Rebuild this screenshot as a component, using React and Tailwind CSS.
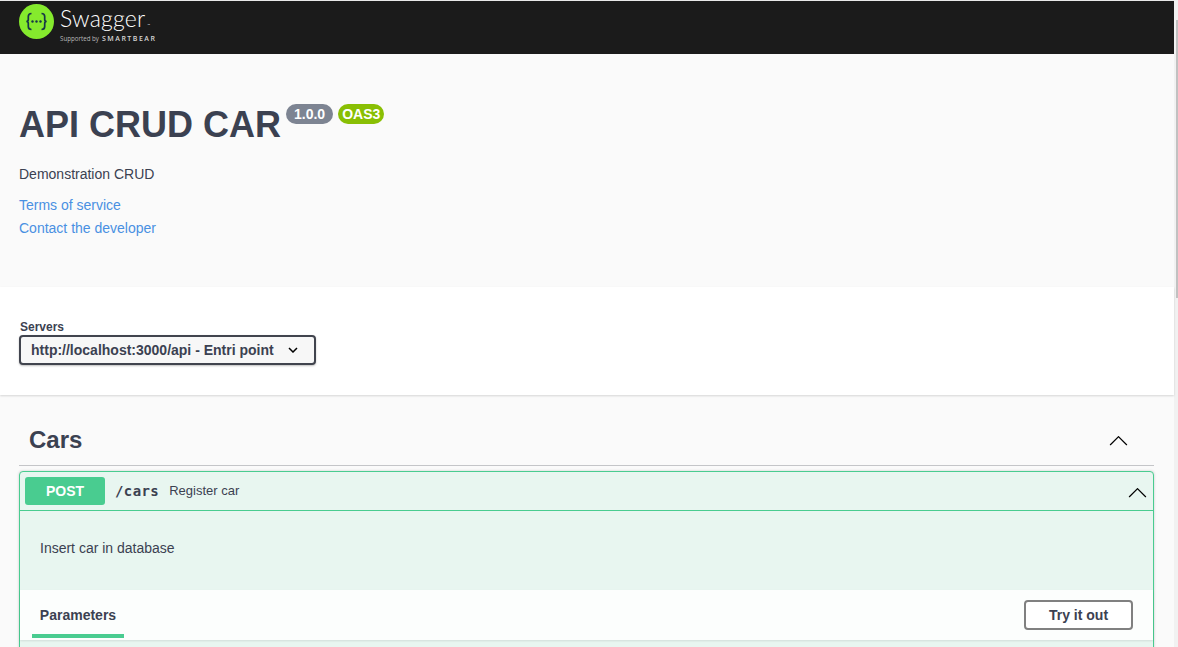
import React from "react";

const sans = "font-['Liberation_Sans',Arial,sans-serif]";

function Logo() {
  return (
    <div className="flex items-start">
      <svg width="35" height="35" viewBox="0 0 35 35" className="shrink-0">
        <circle cx="17.5" cy="17.5" r="17.5" fill="#85ea2d" />
        <path d="M12.5 9.5c-2.600 0-3.200 1-3.200 3v3c0 1.300-.8 2-2 2 1.200 0 2 .7 2 2v3c0 2 .6 3 3.200 3M22.500 9.500c2.600 0 3.200 1 3.200 3v3c0 1.300.8 2 2 2-1.200 0-2 .7-2 2v3c0 2-.6 3-3.200 3" fill="none" stroke="#173647" strokeWidth="1.700" />
        <circle cx="13.500" cy="17.500" r="1.200" fill="#173647" />
        <circle cx="17.500" cy="17.500" r="1.200" fill="#173647" />
        <circle cx="21.500" cy="17.500" r="1.200" fill="#173647" />
      </svg>
      <div className="ml-[6px] flex flex-col">
        <div className="flex items-end h-[29px]">
          <span className="font-['Lato',sans-serif] font-light text-[23px] leading-[29px] tracking-[0.2px] text-white">Swagger</span>
          <span className="text-[3px] text-white mb-[6px] ml-[2px]">™</span>
        </div>
        <div className="flex items-center h-[10px] mt-[1px] whitespace-nowrap">
          <span className="font-['Open_Sans',sans-serif] text-[6.200px] leading-[10px] text-[#b9b9b9]">Supported by</span>
          <span className="font-['Open_Sans',sans-serif] font-semibold text-[7px] leading-[10px] tracking-[1.500px] text-[#d5d5d5] ml-[3px]">SMARTBEAR</span>
        </div>
      </div>
    </div>
  );
}

function Chevron({ size = 23 }) {
  return (
    <svg width={size} height={size} viewBox="0 0 20 20" className="shrink-0">
      <path d="M17.418 14.908c-.200.200-.520.200-.720 0L10 8.207l-6.698 6.701c-.200.200-.520.200-.720 0-.200-.200-.200-.520 0-.720l7.058-7.060c.200-.200.520-.200.720 0l7.058 7.060c.200.200.200.520 0 .720z" fill="#000" />
    </svg>
  );
}

export default function App() {
  return (
    <div className={`${sans} h-[647px] overflow-hidden flex bg-white text-[#3b4151]`}>
      <div className="flex-1 min-w-0 flex flex-col pt-px bg-[#e8e8e8]">
        <header className="h-[53px] shrink-0 bg-[#1b1b1b] pl-[19px] pt-[3px]">
          <Logo />
        </header>

        {/* info */}
        <section className="h-[233px] shrink-0 bg-[#fafafa] pl-[19px] pt-[50px]">
          <div className="flex items-start">
            <h1 className="text-[36px] leading-[42px] font-bold text-[#3b4151]">API CRUD CAR</h1>
            <span className="ml-[5px] h-[20px] px-[8px] rounded-[57px] bg-[#7d8492] text-white text-[14px] font-bold leading-[20px]">1.0.0</span>
            <span className="ml-[5px] h-[20px] px-[4px] rounded-[57px] bg-[#89bf04] text-white text-[14px] font-bold leading-[20px]">OAS3</span>
          </div>
          <p className="mt-[18px] text-[14px] leading-[20px]">Demonstration CRUD</p>
          <a className="block mt-[11px] text-[14px] leading-[20px] text-[#4990e2]">Terms of service</a>
          <a className="block mt-[3px] text-[14px] leading-[20px] text-[#4990e2]">Contact the developer</a>
        </section>

        {/* servers */}
        <section className="h-[108px] shrink-0 bg-white pl-[19px] pt-[33px] shadow-[0_1px_2px_0_rgba(0,0,0,0.15)] relative">
          <div className="pl-px text-[12px] leading-[14px] font-bold">Servers</div>
          <div className="mt-[1px] w-[297px] h-[30px] flex items-center justify-between pl-[10px] pr-[16px] border-2 border-[#41444e] rounded-[4px] bg-[#f7f7f7] shadow-[0_1px_2px_0_rgba(0,0,0,0.25)]">
            <span className="text-[14px] font-bold whitespace-nowrap">http://localhost:3000/api - Entri point</span>
            <svg width="10" height="6" viewBox="0 0 10 6"><path d="M1 1l4 4 4-4" fill="none" stroke="#000" strokeWidth="1.500" /></svg>
          </div>
        </section>

        {/* tag */}
        <section className="flex-1 min-h-0 bg-[#fafafa] pl-[19px] pr-[20px]">
          <div className="h-[71px] flex items-center justify-between pl-[10px] pr-[24px] border-b border-[#c4c5c8]">
            <h3 className="text-[24px] font-bold leading-[28px] mt-[20px]">Cars</h3>
            <div className="mt-[18px]"><Chevron /></div>
          </div>

          <div className="mt-[5px] h-[300px] border border-[#49cc90] rounded-[4px] bg-[#e8f6f0] shadow-[0_0_3px_0_rgba(0,0,0,0.19)]">
            <div className="h-[39px] flex items-center pl-[5px] pr-[4px] border-b border-[#49cc90]">
              <span className="w-[80px] h-[28px] rounded-[3px] bg-[#49cc90] text-white text-[14px] font-bold flex items-center justify-center">POST</span>
              <span className="ml-[10px] font-['DejaVu_Sans_Mono',monospace] font-bold text-[14px] tracking-[0.4px] leading-[20px]">/cars</span>
              <span className="ml-[10px] text-[13px] leading-[20px]">Register car</span>
              <div className="ml-auto"><Chevron /></div>
            </div>
            <div className="h-[79px] pl-[20px] pt-[27px]">
              <p className="text-[14px] leading-[20px] text-[#3b4151]">Insert car in database</p>
            </div>
            <div className="h-[50px] flex items-center justify-between bg-[#fcfefd] pr-[20px] shadow-[0_1px_2px_rgba(0,0,0,0.1)]">
              <div className="relative h-full w-[92px] ml-[12px] flex items-center justify-center">
                <span className="text-[14px] font-bold">Parameters</span>
                <span className="absolute left-0 right-0 bottom-[2px] h-[4px] bg-[#49cc90]" />
              </div>
              <button className="w-[109px] h-[30px] rounded-[4px] border-2 border-[#808080] bg-white text-[14px] font-bold text-[#3b4151]">Try it out</button>
            </div>
          </div>
        </section>
      </div>

      {/* scrollbar */}
      <div className="w-[4px] shrink-0 bg-[#f1f1f1] pt-[20px] pl-[2px]">
        <div className="h-[278px] w-[2px] bg-[#c1c1c1]" />
      </div>
    </div>
  );
}
